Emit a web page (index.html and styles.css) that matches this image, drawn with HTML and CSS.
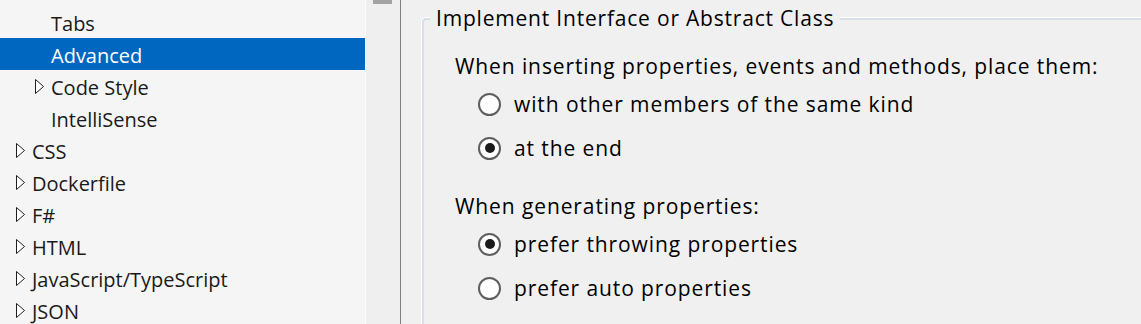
FILE: index.html
```html
<!DOCTYPE html>
<html>
<head>
<meta charset="utf-8">
<link rel="stylesheet" href="styles.css">
</head>
<body>
<div class="tree">
  <div class="row lvl2"><span class="slot"></span><span class="label">Tabs</span></div>
  <div class="row lvl2 selected"><span class="slot"></span><span class="label">Advanced</span></div>
  <div class="row lvl2"><span class="slot"><svg class="tri" width="10" height="15" viewBox="0 0 10 15"><polygon points="0.5,0.5 8.5,7.5 0.5,14.5" fill="#fff" stroke="#1e1e1e" stroke-width="1"/></svg></span><span class="label">Code Style</span></div>
  <div class="row lvl2"><span class="slot"></span><span class="label">IntelliSense</span></div>
  <div class="row lvl1"><span class="slot"><svg class="tri" width="10" height="15" viewBox="0 0 10 15"><polygon points="0.5,0.5 8.5,7.5 0.5,14.5" fill="#fff" stroke="#1e1e1e" stroke-width="1"/></svg></span><span class="label">CSS</span></div>
  <div class="row lvl1"><span class="slot"><svg class="tri" width="10" height="15" viewBox="0 0 10 15"><polygon points="0.5,0.5 8.5,7.5 0.5,14.5" fill="#fff" stroke="#1e1e1e" stroke-width="1"/></svg></span><span class="label">Dockerfile</span></div>
  <div class="row lvl1"><span class="slot"><svg class="tri" width="10" height="15" viewBox="0 0 10 15"><polygon points="0.5,0.5 8.5,7.5 0.5,14.5" fill="#fff" stroke="#1e1e1e" stroke-width="1"/></svg></span><span class="label">F#</span></div>
  <div class="row lvl1"><span class="slot"><svg class="tri" width="10" height="15" viewBox="0 0 10 15"><polygon points="0.5,0.5 8.5,7.5 0.5,14.5" fill="#fff" stroke="#1e1e1e" stroke-width="1"/></svg></span><span class="label">HTML</span></div>
  <div class="row lvl1"><span class="slot"><svg class="tri" width="10" height="15" viewBox="0 0 10 15"><polygon points="0.5,0.5 8.5,7.5 0.5,14.5" fill="#fff" stroke="#1e1e1e" stroke-width="1"/></svg></span><span class="label">JavaScript/TypeScript</span></div>
  <div class="row lvl1"><span class="slot"><svg class="tri" width="10" height="15" viewBox="0 0 10 15"><polygon points="0.5,0.5 8.5,7.5 0.5,14.5" fill="#fff" stroke="#1e1e1e" stroke-width="1"/></svg></span><span class="label">JSON</span></div>
</div>
<div class="scroll"><div class="thumb"></div></div>
<div class="splitter"></div>
<div class="content">
  <div class="group">
    <div class="legend">Implement Interface or Abstract Class</div>
    <div class="group-inner">
      <div class="heading">When inserting properties, events and methods, place them:</div>
      <div class="radio"><span class="circle"></span><span>with other members of the same kind</span></div>
      <div class="radio"><span class="circle checked"></span><span>at the end</span></div>
      <div class="heading second">When generating properties:</div>
      <div class="radio"><span class="circle checked"></span><span>prefer throwing properties</span></div>
      <div class="radio"><span class="circle"></span><span>prefer auto properties</span></div>
    </div>
  </div>
</div>
</body>
</html>
```
FILE: styles.css
```css
html, body {
  margin: 0;
  padding: 0;
  height: 324px;
  overflow: hidden;
}
body {
  display: flex;
  font-family: "Open Sans", "Noto Sans", sans-serif;
  font-size: 20px;
  color: #000;
  background: #f0f0f0;
}
.tree {
  width: 365px;
  flex: none;
  background: #f5f5f5;
  padding-top: 6px;
  border-right: 1px solid #fbfbfb;
}
.row {
  height: 32px;
  display: flex;
  align-items: center;
  color: #1a1a1a;
  white-space: nowrap;
}
.row .label { padding-top: 2px; }
.row.lvl1 { padding-left: 16px; }
.row.lvl2 { padding-left: 35px; }
.slot {
  width: 16px;
  flex: none;
  display: flex;
  align-items: center;
}
.tri { display: block; }
.row.selected {
  background: #0067c0;
  color: #fff;
}
.scroll {
  width: 34px;
  flex: none;
  background: #efefef;
}
.thumb {
  margin-left: 7px;
  width: 19px;
  height: 4px;
  background: #a3a3a3;
}
.splitter {
  width: 1px;
  flex: none;
  background: #7d7d84;
}
.content {
  flex: 1;
  background: #f0f0f0;
  padding: 17px 0 0 20px;
  min-width: 0;
  font-size: 21px;
  letter-spacing: 0.9px;
}
.group {
  position: relative;
  border-top: 1px solid #fff;
  border-left: 1px solid #fff;
  border-top-left-radius: 5px;
  height: 320px;
}
.group-inner {
  border-top: 2px solid #d8dfe7;
  border-left: 2px solid #d8dfe7;
  border-top-left-radius: 4px;
  height: 100%;
  padding: 31px 0 0 31px;
  box-sizing: border-box;
}
.legend {
  position: absolute;
  top: -16px;
  left: 8px;
  padding: 0 6px;
  line-height: 32px;
  background: #f0f0f0;
  white-space: nowrap;
  letter-spacing: 0.8px;
}
.heading {
  line-height: 30px;
  height: 30px;
  margin-bottom: 1px;
  white-space: nowrap;
}
.heading.second { margin-top: 21px; }
.radio {
  height: 44px;
  display: flex;
  align-items: center;
  padding-left: 23px;
  white-space: nowrap;
}
.circle {
  width: 19px;
  height: 19px;
  border: 2px solid #5e5e5e;
  border-radius: 50%;
  background: #fff;
  flex: none;
  margin-right: 13px;
  display: flex;
  align-items: center;
  justify-content: center;
}
.circle.checked::after {
  content: "";
  width: 10px;
  height: 10px;
  border-radius: 50%;
  background: #1b1b1b;
}
```
